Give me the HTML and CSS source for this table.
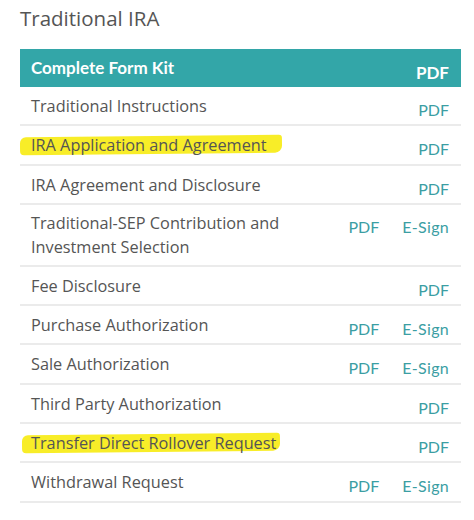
FILE: index.html
```html
<!DOCTYPE html>
<html>
<head>
<meta charset="utf-8">
<link rel="stylesheet" href="styles.css">
</head>
<body>
<div class="page">
  <h1 class="title">Traditional IRA</h1>
  <div class="table">
    <div class="row head">
      <div class="label">Complete Form Kit</div>
      <div class="links"><span class="link">PDF</span></div>
    </div>
    <div class="row">
      <div class="label">Traditional Instructions</div>
      <div class="links"><span class="link">PDF</span></div>
    </div>
    <div class="row">
      <div class="label"><span class="mark m1"></span><span class="txt">IRA Application and Agreement</span></div>
      <div class="links"><span class="link">PDF</span></div>
    </div>
    <div class="row">
      <div class="label">IRA Agreement and Disclosure</div>
      <div class="links"><span class="link">PDF</span></div>
    </div>
    <div class="row tall">
      <div class="label">Traditional-SEP Contribution and<br>Investment Selection</div>
      <div class="links"><span class="link">PDF</span><span class="link">E-Sign</span></div>
    </div>
    <div class="row">
      <div class="label">Fee Disclosure</div>
      <div class="links"><span class="link">PDF</span></div>
    </div>
    <div class="row">
      <div class="label">Purchase Authorization</div>
      <div class="links"><span class="link">PDF</span><span class="link">E-Sign</span></div>
    </div>
    <div class="row">
      <div class="label">Sale Authorization</div>
      <div class="links"><span class="link">PDF</span><span class="link">E-Sign</span></div>
    </div>
    <div class="row">
      <div class="label">Third Party Authorization</div>
      <div class="links"><span class="link">PDF</span></div>
    </div>
    <div class="row">
      <div class="label"><span class="mark m2"></span><span class="txt">Transfer Direct Rollover Request</span></div>
      <div class="links"><span class="link">PDF</span></div>
    </div>
    <div class="row">
      <div class="label">Withdrawal Request</div>
      <div class="links"><span class="link">PDF</span><span class="link">E-Sign</span></div>
    </div>
  </div>
</div>
</body>
</html>
```
FILE: styles.css
```css
html, body {
  margin: 0;
  padding: 0;
  background: #fff;
}
.page {
  padding: 1px 13px 0 20px;
  font-family: "Lato", "Open Sans", sans-serif;
  color: #555;
}
.title {
  margin: 0 0 14px 0;
  font-family: "Open Sans", sans-serif;
  font-weight: 400;
  font-size: 20.5px;
  line-height: 34px;
  color: #555;
}
.table {
  display: flex;
  flex-direction: column;
}
.row {
  display: flex;
  justify-content: space-between;
  align-items: flex-start;
  height: 37.3px;
  padding: 0 12px 0 11px;
  border-bottom: 2px solid #ebebeb;
  font-size: 16px;
  line-height: 24px;
}
.row .label {
  position: relative;
  padding-top: 7px;
  font-family: "Open Sans", sans-serif;
  font-size: 16.3px;
}
.row .links {
  display: flex;
  gap: 23px;
  padding-top: 11px;
}
.link {
  color: #3b9ea3;
}
.link + .link {
  letter-spacing: 0.3px;
}
.row.tall {
  height: 60px;
}
.row.tall .label {
  padding-top: 6px;
}
.row.tall .links {
  padding-top: 10px;
}
.row.head {
  height: 38px;
  border-bottom: 0;
  background: #33a6a8;
  color: #fff;
  font-weight: 700;
  font-size: 17px;
}
.row.head .label {
  padding-top: 7px;
  font-family: "Lato", sans-serif;
  font-size: 17px;
}
.row.head .links {
  padding-top: 12px;
}
.row.head .link {
  color: #fff;
}
.txt {
  position: relative;
}
.mark {
  position: absolute;
  background: #f8ec1c;
  border-radius: 6px 3px 7px 4px;
  opacity: 0.95;
}
.m1 {
  left: -11px;
  top: 10px;
  width: 262px;
  height: 18px;
  transform: rotate(-0.6deg);
}
.m2 {
  left: -9px;
  top: 10px;
  width: 258px;
  height: 18px;
  transform: rotate(-0.6deg);
}
```
